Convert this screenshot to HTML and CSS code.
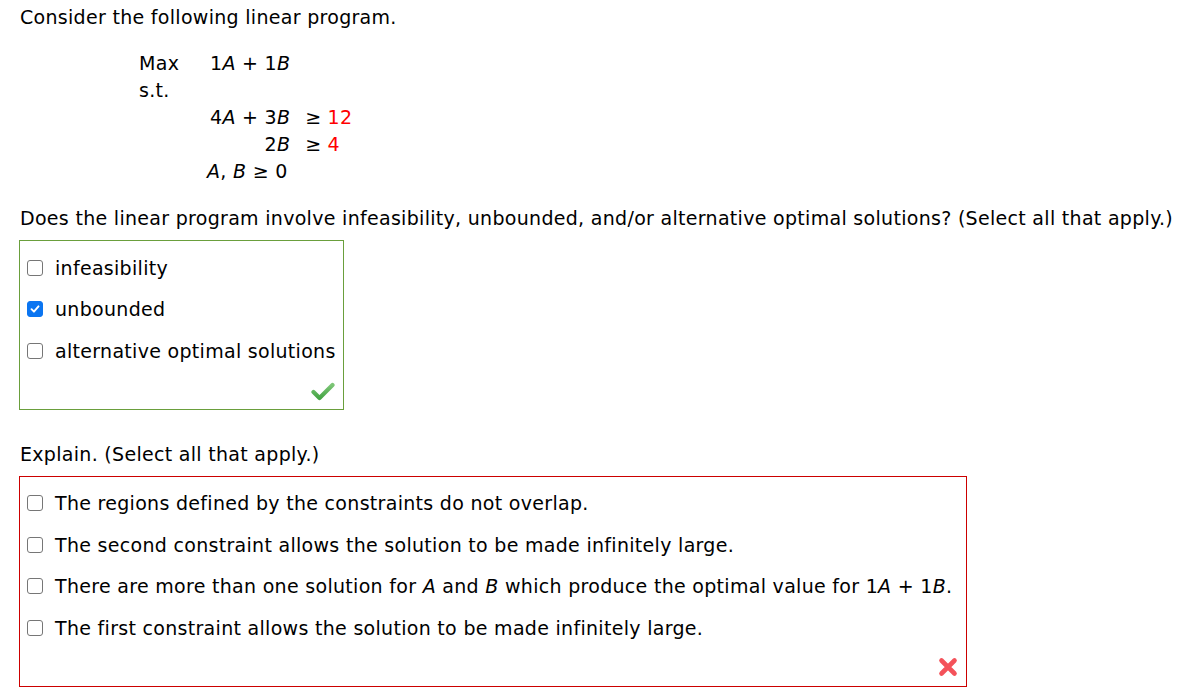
FILE: index.html
```html
<!DOCTYPE html>
<html>
<head>
<meta charset="utf-8">
<link rel="stylesheet" href="styles.css">
</head>
<body>
<p class="intro">Consider the following linear program.</p>
<div class="lp">
  <div class="lp-row"><span class="lp-label">Max</span><span class="lp-expr">1<i>A</i> + 1<i>B</i></span></div>
  <div class="lp-row"><span class="lp-label">s.t.</span></div>
  <table class="cons">
    <tr><td class="lhs">4<i>A</i> + 3<i>B</i></td><td class="rel">≥</td><td class="rhs red">12</td></tr>
    <tr><td class="lhs">2<i>B</i></td><td class="rel">≥</td><td class="rhs red">4</td></tr>
  </table>
  <div class="nonneg"><i>A</i>, <i>B</i> ≥ 0</div>
</div>
<p class="question">Does the linear program involve infeasibility, unbounded, and/or alternative optimal solutions? (Select all that apply.)</p>
<div class="answer ok">
  <div class="opt"><span class="box"></span><span>infeasibility</span></div>
  <div class="opt"><span class="box checked"><svg viewBox="0 0 16 16" width="16" height="16"><path d="M4 8.2 L6.8 11 L12 5" fill="none" stroke="#fff" stroke-width="2.2" stroke-linecap="round" stroke-linejoin="round"/></svg></span><span>unbounded</span></div>
  <div class="opt"><span class="box"></span><span>alternative optimal solutions</span></div>
  <div class="mark">
    <svg viewBox="0 0 24 20" width="24" height="20"><defs><linearGradient id="g" x1="0" y1="0" x2="0" y2="1"><stop offset="0" stop-color="#7cc576"/><stop offset="1" stop-color="#45a545"/></linearGradient></defs><path d="M2.5 11 L8.5 17 L21.5 4" fill="none" stroke="url(#g)" stroke-width="4.2" stroke-linecap="round" stroke-linejoin="round"/></svg>
  </div>
</div>
<p class="explain">Explain. (Select all that apply.)</p>
<div class="answer bad">
  <div class="opt"><span class="box"></span><span>The regions defined by the constraints do not overlap.</span></div>
  <div class="opt"><span class="box"></span><span>The second constraint allows the solution to be made infinitely large.</span></div>
  <div class="opt"><span class="box"></span><span>There are more than one solution for <i>A</i> and <i>B</i> which produce the optimal value for 1<i>A</i> + 1<i>B</i>.</span></div>
  <div class="opt"><span class="box"></span><span>The first constraint allows the solution to be made infinitely large.</span></div>
  <div class="mark x">
    <svg viewBox="0 0 22 22" width="22" height="22"><path d="M4.5 4.5 L17.5 17.5 M17.5 4.5 L4.5 17.5" fill="none" stroke="#f4525a" stroke-width="4.6" stroke-linecap="round"/></svg>
  </div>
</div>
</body>
</html>
```
FILE: styles.css
```css
body {
  margin: 0;
  padding: 0 19px;
  font-family: "DejaVu Sans", Verdana, sans-serif;
  font-size: 19px;
  letter-spacing: 0.3px;
  color: #000;
  background: #fff;
  white-space: nowrap;
}
i { font-style: oblique; }
.red { color: #ff0000; }
.intro { margin: 6px 0 0 1px; line-height: 22px; }
.lp { margin: 22px 0 0 120px; line-height: 27px; }
.lp-row { display: flex; }
.lp-label { width: 71px; }
.cons { border-collapse: collapse; margin-left: 71px; letter-spacing: 0.3px; }
.cons td { padding: 0; line-height: 27px; }
.cons .lhs { text-align: right; }
.cons .rel { padding: 0 6px 0 15px; }
.nonneg { margin-left: 68px; }
.question { margin: 22px 0 0 1px; line-height: 22px; }
.answer {
  position: relative;
  margin-top: 11px;
  border: 1px solid #6a9f3c;
  padding: 6px 8px 0 7px;
}
.answer.ok { width: 308px; height: 162px; }
.answer.bad { border-color: #cc0000; width: 931px; height: 204px; padding-top: 5px; }
.opt { display: flex; align-items: center; height: 41.5px; gap: 12px; }
.answer.bad .opt { height: 41.7px; }
.box {
  width: 14px; height: 14px;
  border: 1px solid #767676;
  border-radius: 3px;
  background: #fff;
  flex: none;
  display: flex;
}
.box.checked { background: #0b75f1; border-color: #0b75f1; }
.box.checked svg { width: 14px; height: 14px; }
.mark { position: absolute; right: 8px; bottom: 8px; line-height: 0; }
.mark.x { right: 7px; bottom: 8px; }
.explain { margin: 33px 0 0 1px; line-height: 22px; }
```
